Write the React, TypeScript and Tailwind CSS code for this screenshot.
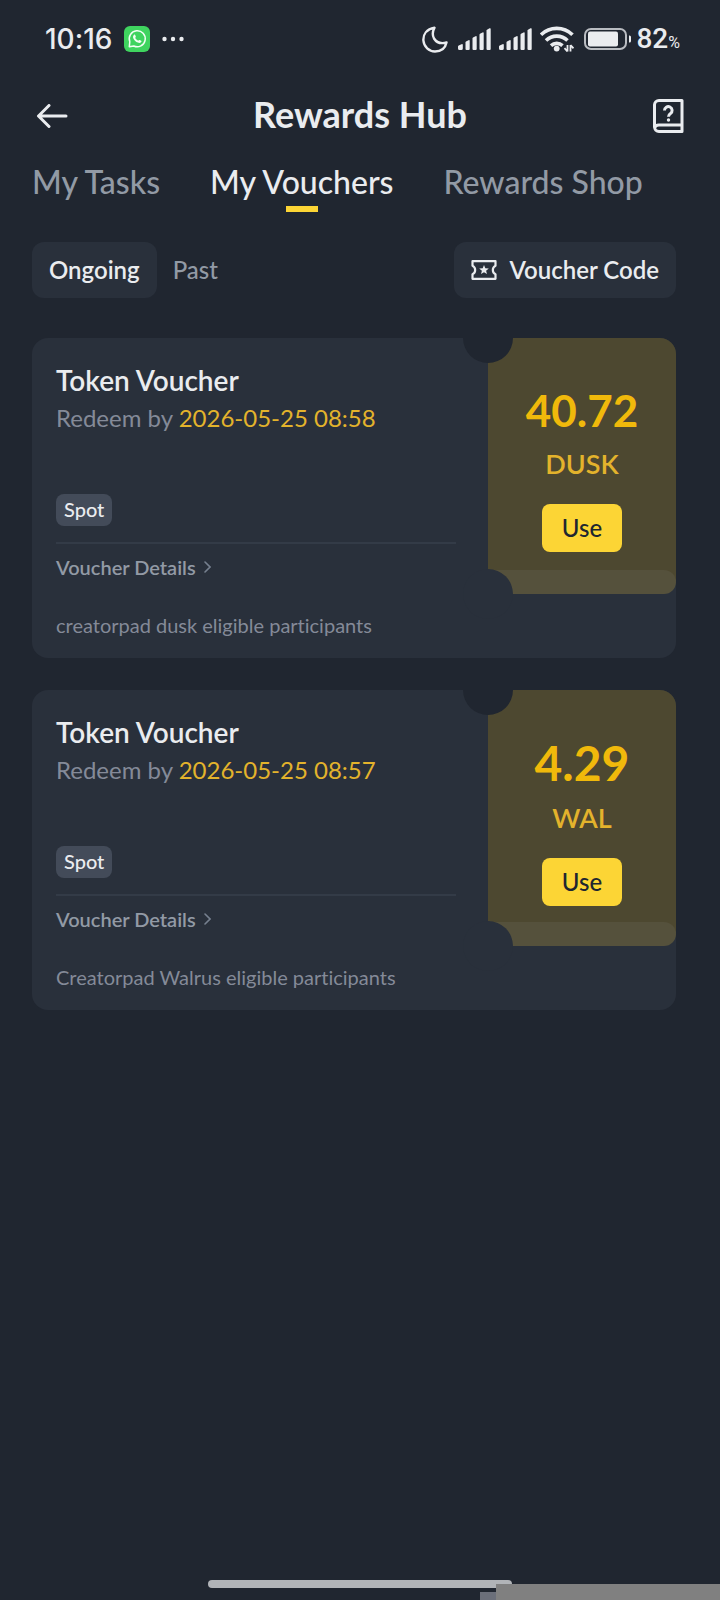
type Voucher = {
  id: number;
  amount: string;
  amountClass: string;
  token: string;
  redeemBy: string;
  note: string;
};

const vouchers: Voucher[] = [
  {
    id: 1,
    amount: "40.72",
    amountClass: "text-[44px] leading-[52px]",
    token: "DUSK",
    redeemBy: "2026-05-25 08:58",
    note: "creatorpad dusk eligible participants",
  },
  {
    id: 2,
    amount: "4.29",
    amountClass: "text-[48px] leading-[54px]",
    token: "WAL",
    redeemBy: "2026-05-25 08:57",
    note: "Creatorpad Walrus eligible participants",
  },
];

const tabs = ["My Tasks", "My Vouchers", "Rewards Shop"];

function SignalIcon() {
  return (
    <svg width="33" height="22" viewBox="0 0 33 22" fill="currentColor">
      <path d="M0 18.500Q0 17.800.7 17.500L3.500 16.200Q4.800 15.700 4.800 17V20.500Q4.800 22 3.300 22H1.500Q0 22 0 20.500z" />
      <path d="M7.500 14.500Q7.500 13.900 8 13.600L10.500 12.200Q11.700 11.700 11.700 13V21Q11.700 22 10.700 22H8.500Q7.500 22 7.500 21z" />
      <path d="M14.500 10.500Q14.500 9.900 15 9.600L17.500 8.200Q18.700 7.700 18.700 9V21Q18.700 22 17.700 22H15.500Q14.500 22 14.500 21z" />
      <path d="M21.500 6.700Q21.500 6.100 22 5.800L24.500 4.400Q25.700 3.900 25.700 5.200V21Q25.700 22 24.700 22H22.500Q21.500 22 21.500 21z" />
      <path d="M28.500 2.600Q28.500 2 29 1.700L31.500.3Q32.700-.2 32.700 1.100V21Q32.700 22 31.700 22H29.500Q28.500 22 28.500 21z" />
    </svg>
  );
}

function StatusBar() {
  return (
    <div className="flex h-[78px] items-center justify-between pr-10 pl-[45px]">
      <div className="flex items-center">
        <span className="font-[Inter] text-[28px] leading-8 font-medium">10:16</span>
        <svg className="ml-3" width="26" height="26" viewBox="0 0 26 26" fill="none">
          <rect width="26" height="26" rx="6" fill="#3fd45f" />
          <path
            d="M5.300 20.700l.5-5A8 8 0 1 1 9.800 20z"
            stroke="#f2fff4"
            strokeWidth="1.500"
            strokeLinejoin="round"
          />
          <path
            d="M10 8.800c.5-.5 1-.3 1.200.2l.6 1.400c.2.500-.7 1.100-.5 1.500.7 1.300 1.600 2.100 2.900 2.700.5.200 1-.9 1.500-.7l1.500.8c.5.300.3.900 0 1.300-.8 1-2 1.100-3.300.6-2.200-.8-4-2.600-4.700-4.700-.4-1.200 0-2.300.8-3.100z"
            fill="#f2fff4"
          />
        </svg>
        <svg className="ml-3" width="22" height="6" viewBox="0 0 22 6" fill="currentColor">
          <circle cx="2.500" cy="3" r="2.200" />
          <circle cx="11" cy="3" r="2.200" />
          <circle cx="19.500" cy="3" r="2.200" />
        </svg>
      </div>

      <div className="flex items-center">
        <svg width="26" height="27" viewBox="0 0 26 27" fill="none">
          <path
            d="M12.500 1.800C4.500 3.300 1 8.500 1.400 14.500 2 21 7 25.500 13 25.500c6 0 10.300-3.500 11.500-9C19 18 14.500 16.500 12 12.500c-1.800-3.300-1.500-7 .5-10.700z"
            stroke="currentColor"
            strokeWidth="2.400"
            strokeLinejoin="round"
          />
        </svg>
        <div className="ml-2.5 flex gap-2">
          <SignalIcon />
          <SignalIcon />
        </div>
        <svg className="ml-2" width="34" height="26" viewBox="0 0 34 26" fill="none">
          <g stroke="currentColor" strokeWidth="3.600">
            <path d="M1 8.800a22.500 22.500 0 0 1 31.500 0" />
            <path d="M6 14.500a15.500 15.500 0 0 1 21.500 0" />
            <path d="M11 19.600a8.500 8.500 0 0 1 11.500 0" />
          </g>
          <circle cx="16.700" cy="22.600" r="2.900" fill="currentColor" />
          <path
            d="M27.500 19v6.500M24.500 22.200l3 3.300M30.500 25.500V19M33.500 22.300l-3-3.300"
            stroke="currentColor"
            strokeWidth="1.800"
          />
        </svg>
        <svg className="ml-2.5" width="48" height="22" viewBox="0 0 48 22" fill="none">
          <rect x="1" y="1" width="41" height="20" rx="6" stroke="#b9bcc1" strokeWidth="2" />
          <rect x="4" y="3.500" width="30" height="15" rx="2" fill="currentColor" />
          <path d="M45 7.500h.5a1.500 1.500 0 0 1 1.500 1.500v4a1.500 1.500 0 0 1-1.500 1.500H45z" fill="currentColor" />
        </svg>
        <span className="ml-1 flex items-baseline font-[Roboto]">
          <span className="text-[28px] leading-8 font-medium">82</span>
          <span className="text-[16px]">%</span>
        </span>
      </div>
    </div>
  );
}

function Header() {
  return (
    <header className="flex h-[76px] items-center justify-between px-9">
      <button type="button" aria-label="Back">
        <svg width="32" height="24" viewBox="0 0 32 24" fill="none">
          <path
            d="M30 12H3M13 1.500L2.500 12 13 22.500"
            stroke="currentColor"
            strokeWidth="3"
            strokeLinecap="round"
            strokeLinejoin="round"
          />
        </svg>
      </button>
      <h1 className="pb-1 text-[36px] leading-10 font-bold">Rewards Hub</h1>
      <button type="button" aria-label="Help">
        <svg width="32" height="34" viewBox="0 0 32 34" fill="none" stroke="currentColor" strokeWidth="3">
          <path
            d="M30 26V1.500H7A4.500 4.500 0 0 0 2.500 6v22A4.500 4.500 0 0 0 7 32.500h23V26H7A4.500 4.500 0 0 0 2.500 29.500"
            strokeLinejoin="round"
          />
          <path d="M12.500 11.500a3.800 3.800 0 1 1 6 3c-1.400.9-2 1.500-2 3.300" />
          <circle cx="16.500" cy="21" r="1.700" fill="currentColor" stroke="none" />
        </svg>
      </button>
    </header>
  );
}

function VoucherCard({ voucher }: { voucher: Voucher }) {
  return (
    <article className="relative overflow-hidden rounded-2xl bg-[#29303b]">
      <div className="grid h-64 grid-cols-[1fr_188px]">
        <div className="pt-6 pr-8 pl-6">
          <h2 className="text-[28px] leading-9 font-semibold">Token Voucher</h2>
          <p className="mt-0.5 text-[24px] leading-9 text-[#848a98]">
            Redeem by <span className="text-[#e3b32c]">{voucher.redeemBy}</span>
          </p>
          <span className="mt-[58px] block h-8 w-fit rounded-lg bg-[#434b59] px-2 text-[20px] leading-[30px] font-medium">
            Spot
          </span>
          <a
            href="#details"
            className="mt-4 flex items-center gap-2 border-t-2 border-[#333b47] pt-2 text-[20px] leading-[30px] font-semibold text-[#929aa5]"
          >
            Voucher Details
            <svg width="7" height="12" viewBox="0 0 7 12" fill="none">
              <path d="M1 1l5 5-5 5" stroke="#76808f" strokeWidth="1.600" strokeLinecap="round" />
            </svg>
          </a>
        </div>

        <div className="relative flex flex-col items-center rounded-br-2xl bg-[#4d4830] pt-[46px] text-[#f0b90b]">
          <div className="absolute inset-x-0 bottom-0 h-6 rounded-r-2xl bg-[#55513c]" />
          <strong className={voucher.amountClass}>{voucher.amount}</strong>
          <span className="mt-2 text-[27px] leading-10 font-semibold text-[#e3b32c]">{voucher.token}</span>
          <button
            type="button"
            className="mt-5 h-12 w-20 rounded-lg bg-[#fcd535] text-[24px] font-medium text-[#202630]"
          >
            Use
          </button>
          {/* ticket notches */}
          <div className="absolute -top-[25px] -left-[25px] size-[50px] rounded-full bg-[#202630]" />
          <div className="absolute -bottom-[25px] -left-[25px] size-[50px] rounded-full bg-[#29303b]" />
        </div>
      </div>
      <p className="flex h-16 items-center px-6 pb-0.5 text-[20px] text-[#848a98]">{voucher.note}</p>
    </article>
  );
}

export default function App() {
  return (
    <div className="relative flex min-h-screen flex-col overflow-hidden bg-[#202630] font-[Lato,sans-serif] text-[#eaecef] [font-variant-ligatures:none]">
      <StatusBar />
      <Header />

      <nav className="flex h-[58px] gap-[50px] px-8 pt-1.5">
        {tabs.map((tab) => (
          <a
            key={tab}
            href="#tab"
            className={
              tab === "My Vouchers"
                ? "flex flex-col items-center text-[32px] leading-[44px] font-medium whitespace-nowrap"
                : "text-[32px] leading-[44px] font-medium whitespace-nowrap text-[#929aa5]"
            }
          >
            {tab}
            {tab === "My Vouchers" && <span className="mt-0.5 h-1.5 w-8 bg-[#fcd535]" />}
          </a>
        ))}
      </nav>

      <div className="mt-[30px] flex items-center pr-11 pl-8">
        <button type="button" className="h-14 rounded-xl bg-[#29303b] px-[17px] text-[24px] font-semibold">
          Ongoing
        </button>
        <button type="button" className="h-14 px-4 text-[24px] font-medium text-[#929aa5]">
          Past
        </button>
        <button
          type="button"
          className="ml-auto flex h-14 items-center gap-3 rounded-xl bg-[#29303b] px-[17px] text-[24px] font-semibold"
        >
          <svg width="26" height="20" viewBox="0 0 26 20" fill="none">
            <path
              d="M1.500 1.200h23v4.500a4.800 4.800 0 0 0 0 8.600v4.500h-23v-4.500a4.800 4.800 0 0 0 0-8.600z"
              stroke="currentColor"
              strokeWidth="2.200"
              strokeLinejoin="round"
            />
            <path
              d="M13 5l1.300 3.300 3.500.2-2.700 2.200.9 3.400-3-1.900-3 1.900.9-3.400-2.700-2.200 3.500-.2z"
              fill="currentColor"
            />
          </svg>
          Voucher Code
        </button>
      </div>

      <main className="mt-10 flex flex-col gap-8 pr-11 pl-8">
        {vouchers.map((voucher) => (
          <VoucherCard key={voucher.id} voucher={voucher} />
        ))}
      </main>

      <div className="mt-auto mb-3 h-2 w-[304px] self-center rounded-full bg-[#b1b4b8]" />
      <div className="absolute right-0 bottom-0 flex items-end">
        <div className="h-2 w-4 bg-[#6b6f7a]" />
        <div className="h-4 w-56 bg-[#808080]" />
      </div>
    </div>
  );
}
